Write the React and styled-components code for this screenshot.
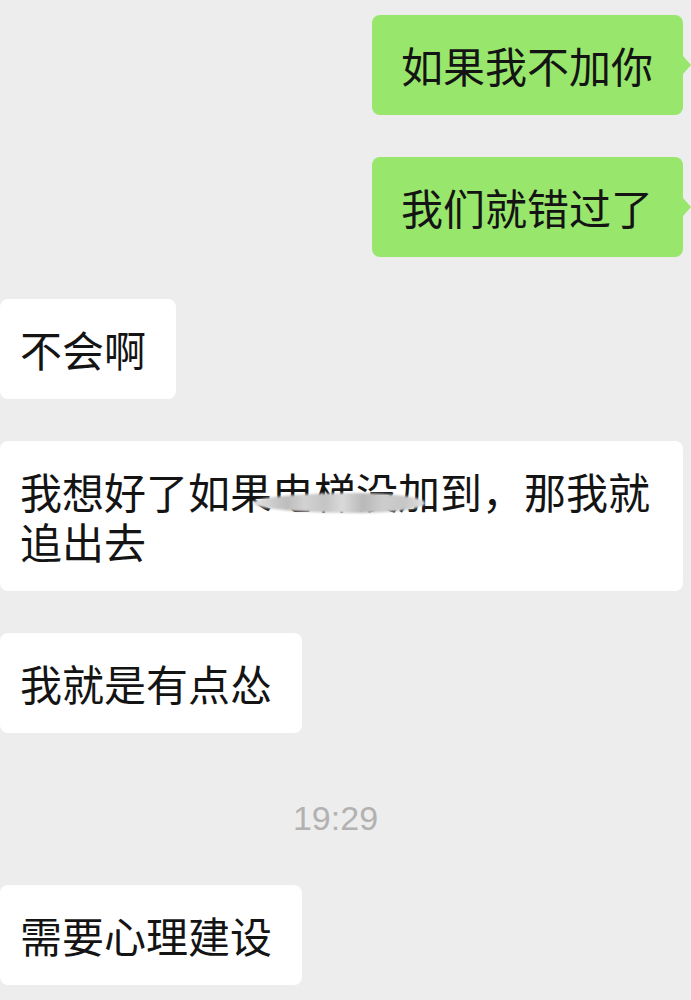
import React from 'react';
import styled, { createGlobalStyle } from 'styled-components';

const GlobalStyle = createGlobalStyle`
  html, body {
    margin: 0;
    padding: 0;
    background: #ededed;
  }
  body {
    font-family: "Noto Sans CJK SC", "Noto Sans", sans-serif;
  }
`;

const Chat = styled.div`
  width: 691px;
  height: 1000px;
  overflow: hidden;
  background: #ededed;
  display: flex;
  flex-direction: column;
  padding-top: 15px;
  box-sizing: border-box;
`;

const Row = styled.div`
  display: flex;
  justify-content: ${p => (p.$mine ? 'flex-end' : 'flex-start')};
  padding-right: ${p => (p.$mine ? '8px' : '0')};
  margin-bottom: 42px;
`;

const Bubble = styled.div`
  position: relative;
  max-width: 683px;
  box-sizing: border-box;
  padding: 25px 30px 25px ${p => (p.$mine ? '29px' : '20px')};
  border-radius: 8px;
  background: ${p => (p.$mine ? '#98e66c' : '#ffffff')};
  color: #141414;
  font-size: 42px;
  font-weight: 400;
  line-height: 50px;

  ${p =>
    p.$mine &&
    `
    &::after {
      content: '';
      position: absolute;
      right: -8px;
      top: 41px;
      border-top: 9px solid transparent;
      border-bottom: 9px solid transparent;
      border-left: 8px solid #98e66c;
    }
  `}
`;

const Mosaic = styled.span`
  position: absolute;
  left: 253px;
  top: 52px;
  width: 172px;
  height: 20px;
  border-radius: 60% 40% 40% 60% / 50%;
  background: linear-gradient(
    90deg,
    #e4e4e4 0%,
    #cfcfcf 10%,
    #bdbdbd 20%,
    #d2d2d2 30%,
    #c4c4c4 42%,
    #dadada 52%,
    #b9b9b9 64%,
    #cdcdcd 76%,
    #c6c6c6 88%,
    #e2e2e2 100%
  );
  filter: blur(1px);
`;

const Time = styled.div`
  text-align: center;
  font-family: "Liberation Sans", Arial, sans-serif;
  font-size: 34px;
  line-height: 40px;
  color: #b2b2b2;
  padding-right: 20px;
  margin: 23px 0 47px;
`;

const messages = [
  { mine: true, text: '如果我不加你' },
  { mine: true, text: '我们就错过了' },
  { mine: false, text: '不会啊' },
  { mine: false, text: '我想好了如果电梯没加到，那我就追出去', masked: true },
  { mine: false, text: '我就是有点怂' },
  { time: '19:29' },
  { mine: false, text: '需要心理建设' },
];

const App = () => (
  <>
    <GlobalStyle />
    <Chat>
      {messages.map((m, i) =>
        m.time ? (
          <Time key={i}>{m.time}</Time>
        ) : (
          <Row key={i} $mine={m.mine}>
            <Bubble $mine={m.mine}>
              {m.text}
              {m.masked && <Mosaic />}
            </Bubble>
          </Row>
        )
      )}
    </Chat>
  </>
);

export default App;
